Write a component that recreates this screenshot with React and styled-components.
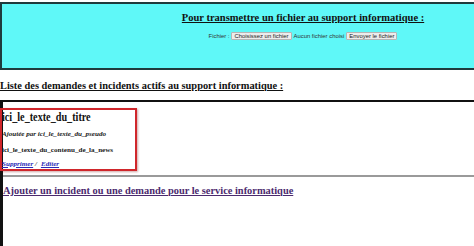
import React from "react";
import styled, { createGlobalStyle } from "styled-components";

const Global = createGlobalStyle`
  html, body { margin: 0; padding: 0; background: #fff; overflow: hidden; }
  body { font-family: "Liberation Serif", "Times New Roman", serif; color: #000; }
`;

const Page = styled.div`
  width: 474px;
  height: 246px;
  overflow: hidden;
  padding-top: 2px;
  box-sizing: border-box;
`;

const UploadPanel = styled.div`
  width: 606px;
  height: 68px;
  box-sizing: border-box;
  background: #5ff8f8;
  border: 2px solid #1f3b3d;
  display: flex;
  flex-direction: column;
  align-items: center;
  padding-top: 7px;
`;

const PanelTitle = styled.h2`
  margin: 0;
  font-size: 10.5px;
  line-height: 13px;
  font-weight: bold;
  text-decoration: underline;
  color: #111;
`;

const FileRow = styled.div`
  display: flex;
  align-items: center;
  gap: 2px;
  margin-top: 8px;
  font-family: "Liberation Sans", Arial, sans-serif;
  font-size: 5.9px;
  color: #333;
`;

const FileButton = styled.button`
  font-family: "Liberation Sans", Arial, sans-serif;
  font-size: 5.9px;
  color: #222;
  background: #ececec;
  border: 1px solid #b5b5b5;
  border-radius: 1px;
  padding: 0 2px;
  height: 8px;
  line-height: 6px;
  margin: 0;
`;

const SectionTitle = styled.h3`
  margin: 9px 0 0 0;
  font-size: 10.4px;
  font-weight: bold;
  text-decoration: underline;
  color: #111;
  line-height: 13px;
`;

const NewsSection = styled.div`
  margin-top: 8px;
  border-top: 2px solid #111;
  border-left: 3px solid #111;
  height: 200px;
  box-sizing: border-box;
  padding-top: 6px;
`;

const NewsCard = styled.div`
  margin-left: -3px;
  width: 137px;
  height: 63px;
  box-sizing: border-box;
  border: 2px solid #d0262b;
  box-shadow: 1px 1px 2px rgba(120, 0, 0, 0.35);
`;

const NewsTitle = styled.div`
  font-size: 10.2px;
  font-weight: bold;
  line-height: 13px;
  color: #111;
  transform: scaleY(1.2);
  transform-origin: left center;
`;

const SmallLine = styled.div`
  font-size: 7.1px;
  font-weight: bold;
  font-style: ${(p) => (p.$italic ? "italic" : "normal")};
  line-height: 8px;
  margin-top: ${(p) => p.$mt}px;
  color: #222;
`;

const Actions = styled.div`
  font-size: 7.1px;
  font-weight: bold;
  font-style: italic;
  line-height: 8px;
  margin-top: 6px;
  color: #333;
`;

const ActionLink = styled.a`
  color: #2a2ab8;
  text-decoration: underline;
  margin-left: ${(p) => (p.$ml ? "4px" : "0")};
`;

const Divider = styled.hr`
  margin: 4px 0 0 0;
  border: none;
  border-top: 2px solid #9a9a9a;
  height: 0;
`;

const AddLink = styled.a`
  display: inline-block;
  margin-top: 7px;
  line-height: 13px;
  font-size: 10.4px;
  font-weight: bold;
  color: #4b2a6e;
  text-decoration: underline;
`;

export default function App() {
  return (
    <>
      <Global />
      <Page>
        <UploadPanel>
          <PanelTitle>Pour transmettre un fichier au support informatique :</PanelTitle>
          <FileRow>
            <span>Fichier :</span>
            <FileButton>Choisissez un fichier</FileButton>
            <span>Aucun fichier choisi</span>
            <FileButton>Envoyer le fichier</FileButton>
          </FileRow>
        </UploadPanel>
        <SectionTitle>Liste des demandes et incidents actifs au support informatique :</SectionTitle>
        <NewsSection>
          <NewsCard>
            <NewsTitle>ici_le_texte_du_titre</NewsTitle>
            <SmallLine $italic $mt={7}>Ajoutée par ici_le_texte_du_pseudo</SmallLine>
            <SmallLine $mt={8}>ici_le_texte_du_contenu_de_la_news</SmallLine>
            <Actions>
              <ActionLink href="#">Supprimer</ActionLink> /
              <ActionLink href="#" $ml>Editer</ActionLink>
            </Actions>
          </NewsCard>
          <Divider />
          <AddLink href="#">Ajouter un incident ou une demande pour le service informatique</AddLink>
        </NewsSection>
      </Page>
    </>
  );
}
